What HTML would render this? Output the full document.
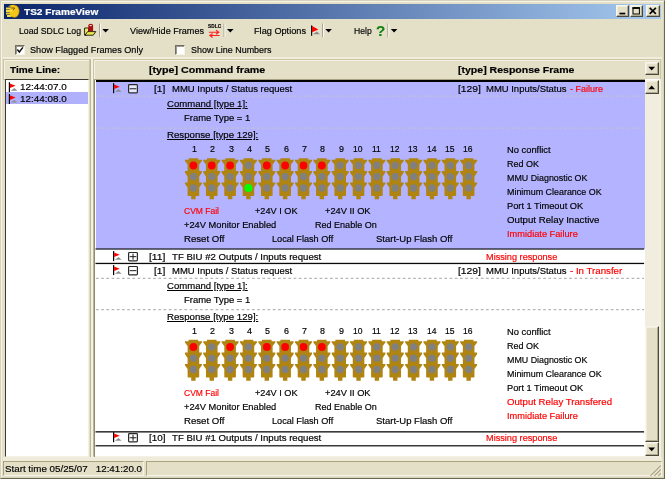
<!DOCTYPE html>
<html><head><meta charset="utf-8"><title>TS2 FrameView</title>
<style>
html,body{margin:0;padding:0;}
body{width:665px;height:479px;overflow:hidden;background:#e4e0c8;position:relative;font-family:"Liberation Sans",sans-serif;}
.a{position:absolute;box-sizing:border-box;}
.t{position:absolute;white-space:pre;font-family:"Liberation Sans",sans-serif;font-size:9.2px;line-height:12px;height:12px;color:#000;transform-origin:0 50%;-webkit-text-stroke:0.18px;}
.b{font-weight:bold;}
.u{text-decoration:underline;text-underline-offset:1px;text-decoration-thickness:0.8px;}
.ov{position:absolute;left:0;top:0;}
.btn{background:#e4e0c8;border:1px solid;border-color:#f8f6ec #4a483c #4a483c #f8f6ec;box-shadow:inset -1px -1px 0 #b0ab8e,inset 1px 1px 0 #f1eee0;}
.hdr{background:#e4e0c8;border:1px solid;border-color:#cbc5a2 #cbc5a2 #bdb794 #cbc5a2;box-shadow:inset 1px 1px 0 #f3f1e4;}
.cb{background:#fff;border:1px solid;border-color:#716f64 #f5f4ea #f5f4ea #716f64;box-shadow:inset 1px 1px 0 #9d9a8a;}
</style></head><body>
<!-- window frame -->
<div class="a" style="left:0;top:0;width:665px;height:479px;border:1px solid;border-style:solid;border-width:1px 1.4px 1.4px 1px;border-color:#d6d2ba #6b6850 #6b6850 #d6d2ba;"></div>
<div class="a" style="left:1px;top:1px;width:663px;height:477px;border:1px solid;border-color:#f6f4ea #d9d5bd #d9d5bd #f6f4ea;"></div>
<!-- title bar -->
<div class="a" style="left:3.6px;top:3.6px;width:657.8px;height:15.4px;background:linear-gradient(90deg,#0a246a 0%,#a6caf0 100%);"></div>
<div class="a btn" style="left:616.3px;top:5.2px;width:13px;height:12px;"></div>
<div class="a btn" style="left:629.8px;top:5.2px;width:13.6px;height:12px;"></div>
<div class="a btn" style="left:645.8px;top:5.2px;width:13.8px;height:12px;"></div>
<!-- toolbar highlight line -->
<div class="a" style="left:3px;top:57px;width:659px;height:1.5px;background:#f0eddd;"></div>
<!-- checkboxes -->
<div class="a cb" style="left:15px;top:45px;width:10.4px;height:10.4px;"></div>
<div class="a cb" style="left:175px;top:45px;width:10.4px;height:10.4px;"></div>
<!-- left panel -->
<div class="a hdr" style="left:3.4px;top:58.5px;width:86.6px;height:21px;"></div>
<div class="a" style="left:4.8px;top:79px;width:84.4px;height:378.4px;background:#fff;border:1px solid;border-color:#3a382f #f3f1e6 #f3f1e6 #3a382f;"></div>
<div class="a" style="left:5.8px;top:92.3px;width:82.4px;height:12px;background:#b1b1fb;"></div>
<!-- splitter -->
<div class="a" style="left:89.6px;top:58.5px;width:1px;height:399px;background:#bdb794;"></div>
<div class="a" style="left:90.6px;top:58.5px;width:2.2px;height:399px;background:#f3f1e4;"></div>
<!-- right panel -->
<div class="a hdr" style="left:93px;top:58.5px;width:568px;height:21px;"></div>
<div class="a" style="left:93px;top:79px;width:568px;height:378.4px;background:#fff;border-left:1px solid #bdb794;border-right:2.2px solid #f3f1e4;border-bottom:1px solid #f3f1e6;"></div>
<div class="a" style="left:94px;top:79px;width:1.4px;height:378px;background:#8d8a70;"></div>
<div class="a" style="left:94.4px;top:78.6px;width:551px;height:1.2px;background:#a7a284;"></div>
<div class="a" style="left:95.5px;top:79.8px;width:549.5px;height:2px;background:#000;"></div>
<div class="a" style="left:95.5px;top:81.6px;width:549.5px;height:167.2px;background:#b3b3ff;"></div>
<!-- header dropdown button -->
<div class="a btn" style="left:644.6px;top:62px;width:14px;height:12.6px;"></div>
<!-- scrollbar -->
<div class="a" style="left:645px;top:79.5px;width:13.8px;height:377px;background:#f1eee0;"></div>
<div class="a btn" style="left:645px;top:80px;width:13.8px;height:13.6px;"></div>
<div class="a btn" style="left:645px;top:325.5px;width:13.8px;height:116px;"></div>
<div class="a btn" style="left:645px;top:442.4px;width:13.8px;height:14px;"></div>
<!-- status bar -->
<div class="a" style="left:3px;top:457px;width:659px;height:3.6px;background:#efecdc;"></div>
<div class="a" style="left:3px;top:461px;width:140.6px;height:15.4px;border:1px solid;border-color:#aaa47e #f6f4ea #f6f4ea #aaa47e;"></div>
<div class="a" style="left:145.6px;top:461px;width:516px;height:15.4px;border:1px solid;border-color:#aaa47e #f6f4ea #f6f4ea #aaa47e;"></div>
<svg class="ov" width="665" height="479" viewBox="0 0 665 479">
<defs>
<symbol id="tl" overflow="visible">
<path fill="#b08410" d="M3.7 0 H13.3 V1.4 H17 V2.7 L14.3 6.3 V12.8 H17 V14.1 L14.3 18.1 V24.1 H17 V25.4 L14.3 29.2 V36.9 Q14.3 37.7 13.5 37.7 H10.7 V40.9 H6.3 V37.7 H3.5 Q2.7 37.7 2.7 36.9 V29.2 L0 25.4 V24.1 H2.7 V18.1 L0 14.1 V12.8 H2.7 V6.3 L0 2.7 V1.4 H3.7 Z"/>
<circle cx="8.5" cy="7.2" r="3.65" fill="#808080"/><circle cx="8.5" cy="18.4" r="3.65" fill="#808080"/><circle cx="8.5" cy="29.7" r="3.65" fill="#808080"/>
</symbol>
</defs>
<!-- row separator lines -->
<g fill="#0a0a0a"><rect x="95.5" y="248.45" width="548.6" height="1.15"/><rect x="95.5" y="262.8" width="548.6" height="1.3"/><rect x="95.5" y="431.2" width="548.6" height="1.3"/><rect x="95.5" y="445.2" width="548.6" height="1.2"/></g>
<!-- dashed lines -->
<line x1="96" y1="96.2" x2="644" y2="96.2" stroke="#c3c1cf" stroke-width="1.2" stroke-dasharray="2.7 2.5"/><line x1="96" y1="128.2" x2="644" y2="128.2" stroke="#c3c1cf" stroke-width="1.2" stroke-dasharray="2.7 2.5"/><line x1="96" y1="278.4" x2="644" y2="278.4" stroke="#b6b6b6" stroke-width="1.2" stroke-dasharray="2.7 2.5"/><line x1="96" y1="309.6" x2="644" y2="309.6" stroke="#b6b6b6" stroke-width="1.2" stroke-dasharray="2.7 2.5"/>
<!-- lights -->
<use href="#tl" x="184.90" y="158.3"/>
<use href="#tl" x="203.25" y="158.3"/>
<use href="#tl" x="221.60" y="158.3"/>
<use href="#tl" x="239.95" y="158.3"/>
<use href="#tl" x="258.30" y="158.3"/>
<use href="#tl" x="276.65" y="158.3"/>
<use href="#tl" x="295.00" y="158.3"/>
<use href="#tl" x="313.35" y="158.3"/>
<use href="#tl" x="331.70" y="158.3"/>
<use href="#tl" x="350.05" y="158.3"/>
<use href="#tl" x="368.40" y="158.3"/>
<use href="#tl" x="386.75" y="158.3"/>
<use href="#tl" x="405.10" y="158.3"/>
<use href="#tl" x="423.45" y="158.3"/>
<use href="#tl" x="441.80" y="158.3"/>
<use href="#tl" x="460.15" y="158.3"/>
<circle cx="193.40" cy="165.50" r="3.9" fill="#ff0000"/>
<circle cx="211.75" cy="165.50" r="3.9" fill="#ff0000"/>
<circle cx="230.10" cy="165.50" r="3.9" fill="#ff0000"/>
<circle cx="266.80" cy="165.50" r="3.9" fill="#ff0000"/>
<circle cx="285.15" cy="165.50" r="3.9" fill="#ff0000"/>
<circle cx="303.50" cy="165.50" r="3.9" fill="#ff0000"/>
<circle cx="321.85" cy="165.50" r="3.9" fill="#ff0000"/>
<circle cx="248.45" cy="188.00" r="3.9" fill="#00ff00"/>
<use href="#tl" x="184.90" y="339.8"/>
<use href="#tl" x="203.25" y="339.8"/>
<use href="#tl" x="221.60" y="339.8"/>
<use href="#tl" x="239.95" y="339.8"/>
<use href="#tl" x="258.30" y="339.8"/>
<use href="#tl" x="276.65" y="339.8"/>
<use href="#tl" x="295.00" y="339.8"/>
<use href="#tl" x="313.35" y="339.8"/>
<use href="#tl" x="331.70" y="339.8"/>
<use href="#tl" x="350.05" y="339.8"/>
<use href="#tl" x="368.40" y="339.8"/>
<use href="#tl" x="386.75" y="339.8"/>
<use href="#tl" x="405.10" y="339.8"/>
<use href="#tl" x="423.45" y="339.8"/>
<use href="#tl" x="441.80" y="339.8"/>
<use href="#tl" x="460.15" y="339.8"/>
<circle cx="193.40" cy="347.00" r="3.9" fill="#ff0000"/>
<circle cx="230.10" cy="347.00" r="3.9" fill="#ff0000"/>
<circle cx="266.80" cy="347.00" r="3.9" fill="#ff0000"/>
<circle cx="285.15" cy="347.00" r="3.9" fill="#ff0000"/>
<circle cx="303.50" cy="347.00" r="3.9" fill="#ff0000"/>
<circle cx="321.85" cy="347.00" r="3.9" fill="#ff0000"/>
<!-- row icons -->
<g transform="translate(113,83.2)"><rect x="0" y="0" width="1.2" height="10" fill="#000"/><path d="M1.1 1.3 L6.8 3.6 L1.1 5.9 Z" fill="#ff0000"/><path d="M1.9 8.6 L5.6 5.9 L8.6 8.6 Z" fill="#8e8e8e"/></g><g transform="translate(128,84)"><rect x="0.6" y="0.6" width="8.8" height="8.3" rx="0.8" fill="#fff" fill-opacity="0.7" stroke="#2a2a2a" stroke-width="1.2"/><rect x="1.7" y="4.3" width="6.6" height="0.95" fill="#111"/></g>
<g transform="translate(113,251.1)"><rect x="0" y="0" width="1.2" height="10" fill="#000"/><path d="M1.1 1.3 L6.8 3.6 L1.1 5.9 Z" fill="#ff0000"/><path d="M1.9 8.6 L5.6 5.9 L8.6 8.6 Z" fill="#8e8e8e"/></g><g transform="translate(128,251.9)"><rect x="0.6" y="0.6" width="8.8" height="8.3" rx="0.8" fill="#fff" fill-opacity="0.7" stroke="#2a2a2a" stroke-width="1.2"/><rect x="1.7" y="4.3" width="6.6" height="0.95" fill="#111"/><rect x="4.55" y="1.8" width="0.95" height="6" fill="#111"/></g>
<g transform="translate(113,265.1)"><rect x="0" y="0" width="1.2" height="10" fill="#000"/><path d="M1.1 1.3 L6.8 3.6 L1.1 5.9 Z" fill="#ff0000"/><path d="M1.9 8.6 L5.6 5.9 L8.6 8.6 Z" fill="#8e8e8e"/></g><g transform="translate(128,265.9)"><rect x="0.6" y="0.6" width="8.8" height="8.3" rx="0.8" fill="#fff" fill-opacity="0.7" stroke="#2a2a2a" stroke-width="1.2"/><rect x="1.7" y="4.3" width="6.6" height="0.95" fill="#111"/></g>
<g transform="translate(113,432.2)"><rect x="0" y="0" width="1.2" height="10" fill="#000"/><path d="M1.1 1.3 L6.8 3.6 L1.1 5.9 Z" fill="#ff0000"/><path d="M1.9 8.6 L5.6 5.9 L8.6 8.6 Z" fill="#8e8e8e"/></g><g transform="translate(128,433)"><rect x="0.6" y="0.6" width="8.8" height="8.3" rx="0.8" fill="#fff" fill-opacity="0.7" stroke="#2a2a2a" stroke-width="1.2"/><rect x="1.7" y="4.3" width="6.6" height="0.95" fill="#111"/><rect x="4.55" y="1.8" width="0.95" height="6" fill="#111"/></g>
<g transform="translate(8.8,82.2)"><rect x="0" y="0" width="1.2" height="10" fill="#000"/><path d="M1.1 1.3 L6.8 3.6 L1.1 5.9 Z" fill="#ff0000"/><path d="M1.9 8.6 L5.6 5.9 L8.6 8.6 Z" fill="#8e8e8e"/></g><g transform="translate(8.8,94)"><rect x="0" y="0" width="1.2" height="10" fill="#000"/><path d="M1.1 1.3 L6.8 3.6 L1.1 5.9 Z" fill="#ff0000"/><path d="M1.9 8.6 L5.6 5.9 L8.6 8.6 Z" fill="#8e8e8e"/></g>
<!-- toolbar icons -->
<rect x="99" y="23.5" width="1" height="13.5" fill="#a5a294"/><rect x="100" y="23.5" width="1" height="13.5" fill="#fbfaf4"/><path d="M102.3 29 h6.6 l-3.3 3.6 Z" fill="#000"/>
<rect x="223.5" y="23.5" width="1" height="13.5" fill="#a5a294"/><rect x="224.5" y="23.5" width="1" height="13.5" fill="#fbfaf4"/><path d="M227 29 h6.6 l-3.3 3.6 Z" fill="#000"/>
<rect x="322" y="23.5" width="1" height="13.5" fill="#a5a294"/><rect x="323" y="23.5" width="1" height="13.5" fill="#fbfaf4"/><path d="M325.3 29 h6.6 l-3.3 3.6 Z" fill="#000"/>
<rect x="387.3" y="23.5" width="1" height="13.5" fill="#a5a294"/><rect x="388.3" y="23.5" width="1" height="13.5" fill="#fbfaf4"/><path d="M390.8 29 h6.6 l-3.3 3.6 Z" fill="#000"/>
<g transform="translate(311,25.4)"><rect x="0" y="0" width="1.2" height="10.4" fill="#111"/><path d="M1 0.6 L7.3 4 L1 6.8 Z" fill="#ff0000"/><path d="M2 8.8 L5.8 6.2 L9 8.8 Z" fill="#8a8a8a"/></g>
<!-- load icon -->
<g>
<path d="M84.6 28 h4 v6 l-2.2 1.2 h-1.8 z" fill="#f4ee6a" stroke="#111" stroke-width="0.9"/>
<path d="M85 35.2 l2.6 -3.6 h8.2 l-2.6 3.6 z" fill="#eee84a" stroke="#111" stroke-width="0.9"/>
<path d="M88.3 25.6 q0 -1.8 2.4 -1.8 q2.4 0 2.4 1.8 v5.6 h-4.8 z" fill="#a81010"/>
<ellipse cx="90.7" cy="25.6" rx="1.4" ry="0.6" fill="#f4dcdc"/>
</g>
<!-- sdlc icon -->
<g fill="none" stroke="#ff2020" stroke-width="1.1">
<path d="M209 32.2 h9.6 M216 30.2 l2.8 2 l-2.8 2" />
<path d="M219.6 35.5 h-9.6 M212.6 33.5 l-2.8 2 l2.8 2" />
</g>
<!-- title icon -->
<g>
<ellipse cx="14.3" cy="11.2" rx="5" ry="6.3" fill="#f5c419" stroke="#7a5a00" stroke-width="0.6"/>
<rect x="6" y="7.5" width="6.5" height="2" fill="#f5dc3c"/><rect x="6" y="10" width="6.5" height="2" fill="#f5dc3c"/><rect x="6" y="12.5" width="6.5" height="2" fill="#f0c828"/><rect x="7" y="15" width="4.5" height="2" fill="#f5dc3c"/>
<path d="M8 6.5 q3 -2 6 -1.6 l-1 2 z" fill="#f5c419"/>
<path d="M10.5 8 h4.2 l-1.6 2.2" fill="none" stroke="#6a4a00" stroke-width="0.9"/>
</g>
<!-- title buttons glyphs -->
<rect x="619.5" y="12.7" width="5.8" height="1.7" fill="#000"/>
<rect x="633" y="7.8" width="6.4" height="6.2" fill="none" stroke="#000" stroke-width="1"/><rect x="632.5" y="7.2" width="7.4" height="1.7" fill="#000"/>
<path d="M649.7 7.9 l6.2 6 M655.9 7.9 l-6.2 6" stroke="#000" stroke-width="1.6" fill="none"/>
<!-- header dropdown + scroll arrows -->
<path d="M648.3 66.8 h6.8 l-3.4 3.6 z" fill="#000"/>
<path d="M648.3 89.2 h6.8 l-3.4 -3.6 z" fill="#000"/>
<path d="M648.3 447.6 h6.8 l-3.4 3.6 z" fill="#000"/>
<!-- checkmark -->
<path d="M17.3 49.6 l2 2.4 l3.6 -4.6" fill="none" stroke="#111" stroke-width="1.5"/>
<!-- grip -->
<g stroke="#aea680" stroke-width="1.5"><path d="M650.3 475.6 l10.4 -10.4 M654.3 475.6 l6.4 -6.4 M658.2 475.6 l2.5 -2.5"/></g><g stroke="#f6f4ea" stroke-width="0.8"><path d="M649.2 475.6 l11.4 -11.4 M653.2 475.6 l7.4 -7.4 M657.2 475.6 l3.4 -3.4"/></g>
</svg>
<!-- sdlc tiny label + help ? -->
<div class="a" style="left:0;top:0;width:665px;height:60px;will-change:transform;"><span class="t b" style="left:207.8px;top:19.6px;font-size:5.4px;transform:scaleX(0.87);color:#000;letter-spacing:0.1px;">SDLC</span>
<span class="t b" style="left:376px;top:25px;font-size:15.5px;color:#10820f;transform:scaleX(0.98);">?</span></div>
<div class="a" style="left:0;top:0;width:665px;height:479px;will-change:transform;">
<span class="t b" style="left:23.75px;top:6.00px;transform:scaleX(1.0495);color:#fff;font-size:9.6px;">TS2 FrameView</span>
<span class="t" style="left:18.50px;top:25.00px;transform:scaleX(0.9481);">Load SDLC Log</span>
<span class="t" style="left:130.00px;top:25.00px;transform:scaleX(0.9881);">View/Hide Frames</span>
<span class="t" style="left:254.00px;top:25.00px;transform:scaleX(0.9982);">Flag Options</span>
<span class="t" style="left:354.00px;top:25.00px;transform:scaleX(0.9362);">Help</span>
<span class="t" style="left:30.00px;top:44.00px;transform:scaleX(0.9923);">Show Flagged Frames Only</span>
<span class="t" style="left:190.50px;top:44.00px;transform:scaleX(0.9730);">Show Line Numbers</span>
<span class="t b" style="left:9.90px;top:64.00px;transform:scaleX(1.0943);">Time Line:</span>
<span class="t b" style="left:148.75px;top:64.00px;transform:scaleX(1.1618);">[type] Command frame</span>
<span class="t b" style="left:458.00px;top:64.00px;transform:scaleX(1.1456);">[type] Response Frame</span>
<span class="t" style="left:20.30px;top:81.00px;transform:scaleX(1.0751);">12:44:07.0</span>
<span class="t" style="left:20.30px;top:93.00px;transform:scaleX(1.0751);">12:44:08.0</span>
<span class="t" style="left:5.00px;top:463.00px;transform:scaleX(1.0643);">Start time 05/25/07   12:41:20.0</span>
<span class="t" style="left:153.90px;top:83.00px;transform:scaleX(1.1058);">[1]</span>
<span class="t" style="left:171.75px;top:83.00px;transform:scaleX(1.0327);">MMU Inputs / Status request</span>
<span class="t" style="left:458.00px;top:83.00px;transform:scaleX(1.1254);">[129]</span>
<span class="t" style="left:486.00px;top:83.00px;transform:scaleX(1.0304);">MMU Inputs/Status</span>
<span class="t" style="left:570.30px;top:83.00px;transform:scaleX(0.9791);color:#f00;">- Failure</span>
<span class="t u" style="left:166.50px;top:98.00px;transform:scaleX(1.0403);">Command [type 1]:</span>
<span class="t" style="left:183.75px;top:112.00px;transform:scaleX(1.0281);">Frame Type = 1</span>
<span class="t u" style="left:166.50px;top:129.00px;transform:scaleX(1.0513);">Response [type 129]:</span>
<span class="t" style="left:183.75px;top:205.00px;transform:scaleX(0.9264);color:#f00;">CVM Fail</span>
<span class="t" style="left:183.75px;top:219.00px;transform:scaleX(1.0118);">+24V Monitor Enabled</span>
<span class="t" style="left:183.75px;top:233.00px;transform:scaleX(1.0481);">Reset Off</span>
<span class="t" style="left:254.50px;top:205.00px;transform:scaleX(0.9963);">+24V I OK</span>
<span class="t" style="left:324.75px;top:205.00px;transform:scaleX(1.0066);">+24V II OK</span>
<span class="t" style="left:314.75px;top:219.00px;transform:scaleX(0.9828);">Red Enable On</span>
<span class="t" style="left:271.50px;top:233.00px;transform:scaleX(0.9939);">Local Flash Off</span>
<span class="t" style="left:376.00px;top:233.00px;transform:scaleX(1.0355);">Start-Up Flash Off</span>
<span class="t" style="left:507.00px;top:144.00px;transform:scaleX(1.0162);">No conflict</span>
<span class="t" style="left:507.00px;top:158.00px;transform:scaleX(0.9790);">Red OK</span>
<span class="t" style="left:507.00px;top:172.00px;transform:scaleX(0.9661);">MMU Diagnostic OK</span>
<span class="t" style="left:507.00px;top:186.00px;transform:scaleX(0.9699);">Minimum Clearance OK</span>
<span class="t" style="left:507.00px;top:200.00px;transform:scaleX(1.0082);">Port 1 Timeout OK</span>
<span class="t" style="left:507.00px;top:214.00px;transform:scaleX(1.0530);">Output Relay Inactive</span>
<span class="t" style="left:507.00px;top:228.00px;transform:scaleX(1.0047);color:#f00;">Immidiate Failure</span>
<span class="t" style="left:191.81px;top:143.00px;transform:scaleX(0.9700);">1</span>
<span class="t" style="left:210.16px;top:143.00px;transform:scaleX(0.9700);">2</span>
<span class="t" style="left:228.51px;top:143.00px;transform:scaleX(0.9700);">3</span>
<span class="t" style="left:246.86px;top:143.00px;transform:scaleX(0.9700);">4</span>
<span class="t" style="left:265.21px;top:143.00px;transform:scaleX(0.9700);">5</span>
<span class="t" style="left:283.56px;top:143.00px;transform:scaleX(0.9700);">6</span>
<span class="t" style="left:301.91px;top:143.00px;transform:scaleX(0.9700);">7</span>
<span class="t" style="left:320.26px;top:143.00px;transform:scaleX(0.9700);">8</span>
<span class="t" style="left:338.61px;top:143.00px;transform:scaleX(0.9700);">9</span>
<span class="t" style="left:353.19px;top:143.00px;transform:scaleX(0.9300);">10</span>
<span class="t" style="left:371.86px;top:143.00px;transform:scaleX(0.9300);">11</span>
<span class="t" style="left:389.89px;top:143.00px;transform:scaleX(0.9300);">12</span>
<span class="t" style="left:408.24px;top:143.00px;transform:scaleX(0.9300);">13</span>
<span class="t" style="left:426.59px;top:143.00px;transform:scaleX(0.9300);">14</span>
<span class="t" style="left:444.94px;top:143.00px;transform:scaleX(0.9300);">15</span>
<span class="t" style="left:463.29px;top:143.00px;transform:scaleX(0.9300);">16</span>
<span class="t" style="left:153.90px;top:265.00px;transform:scaleX(1.1058);">[1]</span>
<span class="t" style="left:171.75px;top:265.00px;transform:scaleX(1.0327);">MMU Inputs / Status request</span>
<span class="t" style="left:458.00px;top:265.00px;transform:scaleX(1.1254);">[129]</span>
<span class="t" style="left:486.00px;top:265.00px;transform:scaleX(1.0304);">MMU Inputs/Status</span>
<span class="t" style="left:570.30px;top:265.00px;transform:scaleX(1.0539);color:#f00;">- In Transfer</span>
<span class="t u" style="left:166.50px;top:280.00px;transform:scaleX(1.0403);">Command [type 1]:</span>
<span class="t" style="left:183.75px;top:294.00px;transform:scaleX(1.0281);">Frame Type = 1</span>
<span class="t u" style="left:166.50px;top:311.00px;transform:scaleX(1.0513);">Response [type 129]:</span>
<span class="t" style="left:183.75px;top:387.00px;transform:scaleX(0.9264);color:#f00;">CVM Fail</span>
<span class="t" style="left:183.75px;top:401.00px;transform:scaleX(1.0118);">+24V Monitor Enabled</span>
<span class="t" style="left:183.75px;top:415.00px;transform:scaleX(1.0481);">Reset Off</span>
<span class="t" style="left:254.50px;top:387.00px;transform:scaleX(0.9963);">+24V I OK</span>
<span class="t" style="left:324.75px;top:387.00px;transform:scaleX(1.0066);">+24V II OK</span>
<span class="t" style="left:314.75px;top:401.00px;transform:scaleX(0.9828);">Red Enable On</span>
<span class="t" style="left:271.50px;top:415.00px;transform:scaleX(0.9939);">Local Flash Off</span>
<span class="t" style="left:376.00px;top:415.00px;transform:scaleX(1.0355);">Start-Up Flash Off</span>
<span class="t" style="left:507.00px;top:326.00px;transform:scaleX(1.0162);">No conflict</span>
<span class="t" style="left:507.00px;top:340.00px;transform:scaleX(0.9790);">Red OK</span>
<span class="t" style="left:507.00px;top:354.00px;transform:scaleX(0.9661);">MMU Diagnostic OK</span>
<span class="t" style="left:507.00px;top:368.00px;transform:scaleX(0.9699);">Minimum Clearance OK</span>
<span class="t" style="left:507.00px;top:382.00px;transform:scaleX(1.0082);">Port 1 Timeout OK</span>
<span class="t" style="left:507.00px;top:396.00px;transform:scaleX(1.0490);color:#f00;">Output Relay Transfered</span>
<span class="t" style="left:507.00px;top:410.00px;transform:scaleX(1.0047);color:#f00;">Immidiate Failure</span>
<span class="t" style="left:191.81px;top:325.00px;transform:scaleX(0.9700);">1</span>
<span class="t" style="left:210.16px;top:325.00px;transform:scaleX(0.9700);">2</span>
<span class="t" style="left:228.51px;top:325.00px;transform:scaleX(0.9700);">3</span>
<span class="t" style="left:246.86px;top:325.00px;transform:scaleX(0.9700);">4</span>
<span class="t" style="left:265.21px;top:325.00px;transform:scaleX(0.9700);">5</span>
<span class="t" style="left:283.56px;top:325.00px;transform:scaleX(0.9700);">6</span>
<span class="t" style="left:301.91px;top:325.00px;transform:scaleX(0.9700);">7</span>
<span class="t" style="left:320.26px;top:325.00px;transform:scaleX(0.9700);">8</span>
<span class="t" style="left:338.61px;top:325.00px;transform:scaleX(0.9700);">9</span>
<span class="t" style="left:353.19px;top:325.00px;transform:scaleX(0.9300);">10</span>
<span class="t" style="left:371.86px;top:325.00px;transform:scaleX(0.9300);">11</span>
<span class="t" style="left:389.89px;top:325.00px;transform:scaleX(0.9300);">12</span>
<span class="t" style="left:408.24px;top:325.00px;transform:scaleX(0.9300);">13</span>
<span class="t" style="left:426.59px;top:325.00px;transform:scaleX(0.9300);">14</span>
<span class="t" style="left:444.94px;top:325.00px;transform:scaleX(0.9300);">15</span>
<span class="t" style="left:463.29px;top:325.00px;transform:scaleX(0.9300);">16</span>
<span class="t" style="left:148.75px;top:251.00px;transform:scaleX(1.1224);">[11]</span>
<span class="t" style="left:171.75px;top:251.00px;transform:scaleX(1.0475);">TF BIU #2 Outputs / Inputs request</span>
<span class="t" style="left:486.00px;top:251.00px;transform:scaleX(0.9972);color:#f00;">Missing response</span>
<span class="t" style="left:148.75px;top:432.00px;transform:scaleX(1.0732);">[10]</span>
<span class="t" style="left:171.75px;top:432.00px;transform:scaleX(1.0475);">TF BIU #1 Outputs / Inputs request</span>
<span class="t" style="left:486.00px;top:432.00px;transform:scaleX(0.9972);color:#f00;">Missing response</span>
</div>
</body></html>
